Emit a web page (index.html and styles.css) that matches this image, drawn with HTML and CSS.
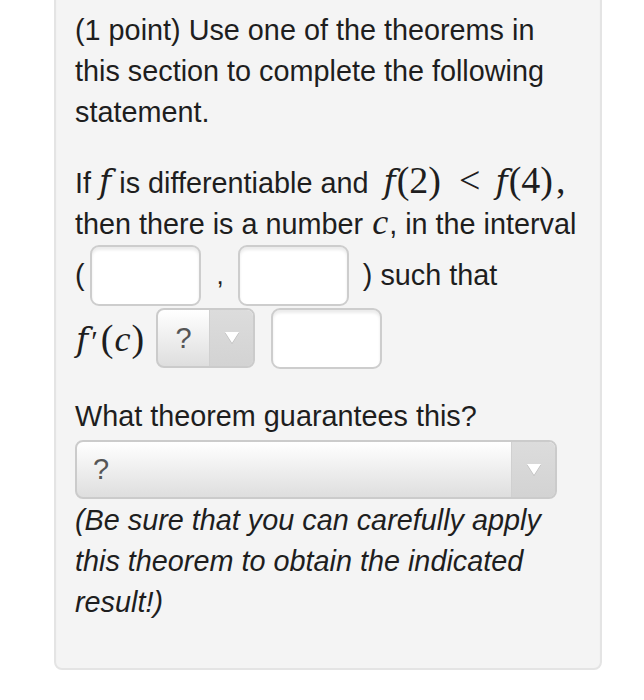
FILE: index.html
```html
<!DOCTYPE html>
<html lang="en">
<head>
<meta charset="utf-8">
<title>Problem</title>
<link rel="stylesheet" href="styles.css">
</head>
<body>
<div class="well">
  <p class="par first">(1 point) Use one of the theorems in<br>this section to complete the following<br>statement.</p>
  <p class="par second">If <span class="mi">f</span> is differentiable and <span class="math wide-math"><span class="mi">f</span>(2)<span class="mo">&lt;</span><span class="mi">f</span>(4)<span class="punct">,</span></span><br>then there is a number <span class="mi cv">c</span>, in the interval</p>
  <div class="row">
    <span class="txt">(</span>
    <input class="box gap-l" type="text" aria-label="left endpoint">
    <span class="txt comma">,</span>
    <input class="box" type="text" aria-label="right endpoint">
    <span class="txt after">) such that</span>
  </div>
  <div class="row">
    <span class="math fc"><span class="mi">f</span><span class="prime">′</span>(<span class="mi cv">c</span>)</span>
    <span class="select small">
      <span class="val">?</span>
      <span class="arrow"></span>
    </span>
    <input class="box" type="text" aria-label="value">
  </div>
  <p class="par q">What theorem guarantees this?</p>
  <span class="select wide">
    <span class="val">?</span>
    <span class="arrow"></span>
  </span>
  <p class="par note">(Be sure that you can carefully apply<br>this theorem to obtain the indicated<br>result!)</p>
</div>
</body>
</html>
```
FILE: styles.css
```css
html, body {
  margin: 0;
  padding: 0;
  background: #ffffff;
}

body {
  font-family: "Liberation Sans", Arial, sans-serif;
  font-size: 28.8px;
  line-height: 41px;
  color: #1e1e1e;
}

.well {
  margin: -12px 0 0 54px;
  width: 506px;
  padding: 20px 19px 45px 19px;
  background: #f4f4f4;
  border: 2px solid #e4e4e4;
  border-radius: 8px;
  box-shadow: inset 0 2px 2px rgba(0, 0, 0, 0.03);
}

.par {
  margin: 29px 0 0 0;
}

.par.first {
  margin-top: 0;
}

.par.second {
  margin-top: 30px;
}

.par.q {
  margin-top: 27px;
}

.par.note {
  margin-top: 1px;
  font-style: italic;
}

.math {
  font-family: "Liberation Serif", "Times New Roman", serif;
  font-size: 38px;
  line-height: 0;
}

.wide-math {
  margin-left: 6px;
}

.mi {
  font-family: "DejaVu Serif", "Liberation Serif", serif;
  font-style: italic;
  font-size: 33px;
  line-height: 0;
}

.mi.cv {
  font-family: "Liberation Serif", "Times New Roman", serif;
  font-size: 36px;
  padding: 0 1px;
}

.math .mi {
  padding: 0 1px;
}

.mo {
  padding: 0 14px 0 18px;
}

.punct {
  margin-left: 3px;
}

.prime {
  font-size: 30px;
  margin-left: 2px;
  margin-right: 3px;
}

.row {
  display: flex;
  align-items: center;
  height: 62px;
  margin-top: -1px;
}

.row + .row {
  margin-top: 1px;
}

.txt {
  white-space: pre;
}

.comma {
  margin: 0 14px 0 16px;
  font-size: 26px;
}

.after {
  margin-left: 14px;
}

.box {
  box-sizing: border-box;
  width: 111px;
  height: 61px;
  margin: 0;
  padding: 0 8px;
  background: #ffffff;
  border: 2px solid #cdcdcd;
  border-radius: 9px;
  box-shadow: inset 0 3px 3px rgba(0, 0, 0, 0.08);
  font: inherit;
}

.box.gap-l {
  margin-left: 5px;
}

.fc {
  margin-right: 12px;
  line-height: 1;
}

.select {
  box-sizing: border-box;
  display: flex;
  align-items: stretch;
  border: 2px solid #cbcbcb;
  border-radius: 8px;
  background: linear-gradient(#ffffff, #dedede);
  overflow: hidden;
  color: #555555;
}

.select.small {
  width: 99px;
  height: 60px;
  margin-right: 16px;
}

.select.wide {
  width: 482px;
  height: 59px;
  margin-top: 3px;
}

.val {
  flex: 1;
  display: flex;
  align-items: center;
  font-size: 29px;
}

.small .val {
  justify-content: center;
}

.wide .val {
  padding-left: 16px;
}

.arrow {
  width: 43px;
  position: relative;
  background: linear-gradient(#dcdcdc, #d3d3d3);
  border-left: 1px solid #d0d0d0;
}

.arrow::before {
  content: "";
  position: absolute;
  left: 50%;
  top: 50%;
  margin: -6px 0 0 -7px;
  border-left: 7px solid transparent;
  border-right: 7px solid transparent;
  border-top: 11px solid #ffffff;
  filter: drop-shadow(0 1px 0 rgba(0, 0, 0, 0.15));
}
```
